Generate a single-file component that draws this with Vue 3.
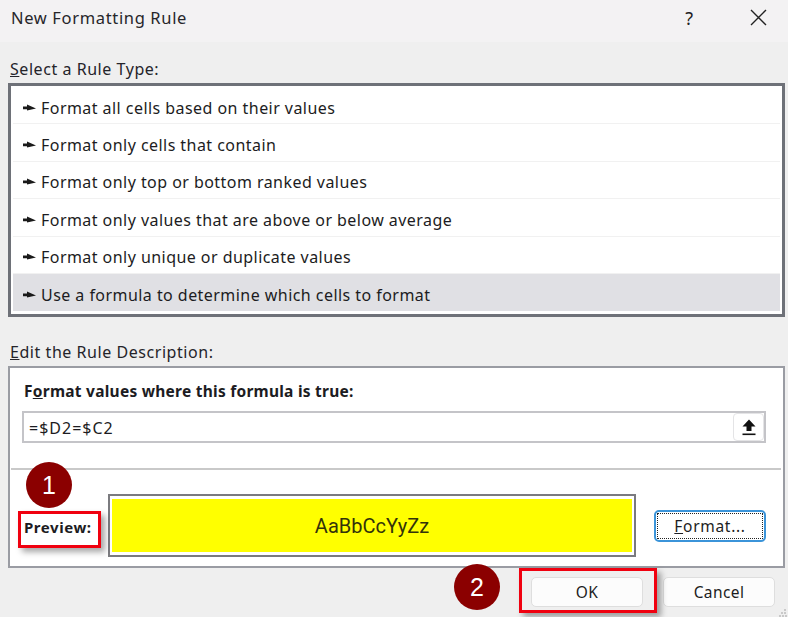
<script setup>
const rules = [
  'Format all cells based on their values',
  'Format only cells that contain',
  'Format only top or bottom ranked values',
  'Format only values that are above or below average',
  'Format only unique or duplicate values',
  'Use a formula to determine which cells to format',
]
</script>

<template>
  <div class="dialog">
    <header class="titlebar">
      <span class="title">New Formatting Rule</span>
      <span class="help">?</span>
      <svg class="close" width="17" height="17" viewBox="0 0 17 17">
        <path d="M1 1L16 16M16 1L1 16" stroke="#222" stroke-width="1.4" fill="none" />
      </svg>
    </header>

    <div class="section-label label-top"><u>S</u>elect a Rule Type:</div>
    <ul class="rule-list">
      <li v-for="(r, i) in rules" :key="r" class="rule" :class="{ selected: i === 5 }">
        <svg class="arrow" width="13" height="8" viewBox="0 0 13 8">
          <path d="M0 2.6H4V0.6L13 4.4L4 6.6V5.2H0Z" fill="#1a1a1a" />
        </svg>
        <span>{{ r }}</span>
      </li>
    </ul>

    <div class="section-label label-edit"><u>E</u>dit the Rule Description:</div>
    <section class="desc">
      <div class="desc-head">F<u>o</u>rmat values where this formula is true:</div>
      <div class="formula">
        <span class="formula-text">=$D2=$C2</span>
        <button class="collapse" type="button" aria-label="Collapse">
          <svg width="14" height="17" viewBox="0 0 14 17">
            <path d="M7 0.5L13.5 7.5H9.5V12H4.5V7.5H0.5Z" fill="#111" />
            <rect x="0.5" y="14.5" width="13" height="1.6" fill="#111" />
          </svg>
        </button>
      </div>
      <hr class="rule-sep" />
      <div class="preview-row">
        <span class="preview-label">Preview:</span>
        <div class="preview-frame"><div class="preview-fill">AaBbCcYyZz</div></div>
        <button class="btn format" type="button"><span class="dots"><u>F</u>ormat...</span></button>
      </div>
    </section>

    <footer class="actions">
      <button class="btn" type="button">OK</button>
      <button class="btn" type="button">Cancel</button>
    </footer>

    <div class="callout-box box-preview"></div>
    <div class="callout-box box-ok"></div>
    <div class="badge badge-1">1</div>
    <div class="badge badge-2">2</div>
    <svg class="grip" width="8" height="8" viewBox="0 0 8 8">
      <path d="M5 0h2v2H5zM2 3h2v2H2zM5 3h2v2H5zM0 6h2v2H0zM3 6h2v2H3zM6 6h2v2H6z" fill="#c9c9c9" />
    </svg>
  </div>
</template>

<style scoped>
.dialog {
  position: relative;
  width: 788px;
  height: 617px;
  overflow: hidden;
  background: #efefef;
  color: #1c1c22;
  font-family: "Noto Sans", "Open Sans", sans-serif;
  font-size: 16px;
  box-sizing: border-box;
}
.titlebar {
  height: 42px;
  background: #f3f2f3;
  display: flex;
  align-items: center;
  padding: 0 21px 7px 11px;
  box-sizing: border-box;
}
.title { flex: 1; font-size: 16.5px; letter-spacing: 0.65px; color: #26262a; }
.help { font-size: 18px; margin-right: 57px; color: #222; }
.section-label { line-height: 22px; padding-left: 10px; color: #24242a; letter-spacing: 0.55px; }
.label-top { margin-top: 16px; }
.rule-list {
  list-style: none;
  margin: 3px 3px 0 8px;
  padding: 1px 2px;
  height: 234px;
  box-sizing: border-box;
  border: 3px solid #6e7178;
  background: #fff;
}
.rule {
  height: 37.4px;
  box-sizing: border-box;
  display: flex;
  align-items: center;
  padding: 5px 0 0 10px;
  gap: 5px;
  letter-spacing: 0.45px;
  border-bottom: 1px solid #f1f1f1;
}
.rule.selected { background: #e0e0e4; border-bottom: 0; }
.label-edit { margin-top: 24px; }
.desc {
  margin: 3px 3px 0 8px;
  height: 202px;
  box-sizing: border-box;
  border: 2px solid #9a9ca3;
  background: #fff;
  padding: 0 1px;
}
.desc-head { font-weight: 700; font-size: 15.5px; letter-spacing: 0.25px; padding: 12px 0 0 13px; line-height: 22px; }
.formula {
  margin: 9px 16px 0 11px;
  height: 32px;
  box-sizing: border-box;
  border: 2px solid #c4c4c8;
  display: flex;
  align-items: center;
  justify-content: space-between;
  padding-left: 5px;
}
.formula-text { letter-spacing: 1px; position: relative; top: 1px; }
.collapse {
  width: 31px;
  height: 28px;
  box-sizing: border-box;
  border: 1px solid #e4e4e6;
  border-radius: 4px;
  background: #fff;
  padding: 0;
  display: flex;
  align-items: center;
  justify-content: center;
}
.rule-sep { border: 0; border-top: 2px solid #c9c9c9; margin: 25px 1px 0 0; }
.preview-row { display: flex; align-items: center; margin-top: 24px; }
.preview-label { font-weight: 700; font-size: 15px; letter-spacing: 0.55px; width: 97px; padding-left: 13px; box-sizing: border-box; position: relative; top: 1px; }
.preview-frame {
  width: 528px;
  height: 63px;
  box-sizing: border-box;
  border: 2px solid #7b7b7f;
  padding: 3px 2px;
}
.preview-fill {
  height: 100%;
  background: #ffff00;
  display: flex;
  align-items: center;
  justify-content: center;
  font-family: "Roboto", "Noto Sans", sans-serif;
  font-size: 20px;
  color: #33330a;
}
.btn {
  width: 112px;
  height: 30px;
  box-sizing: border-box;
  border: 1px solid #dedede;
  border-radius: 5px;
  background: #fcfcfc;
  color: #1c1c22;
  font-family: inherit;
  font-size: 15.5px;
  letter-spacing: 0.4px;
  padding: 0;
}
.format {
  margin-left: 18px;
  height: 32px;
  border: 2px solid #3b94d9;
  background: #fff;
  padding: 1px;
  letter-spacing: 0.7px;
}
.dots {
  display: flex;
  height: 100%;
  box-sizing: border-box;
  border: 1.5px dotted #222;
  align-items: center;
  justify-content: center;
  white-space: pre;
}
.actions { display: flex; justify-content: flex-end; gap: 20px; padding: 9px 13px 0 0; }
.callout-box {
  position: absolute;
  border: 3px solid #f0000f;
  box-sizing: border-box;
  box-shadow: 4px 4px 6px rgba(0, 0, 0, 0.35);
}
.box-preview { left: 18px; top: 511px; width: 83px; height: 37px; }
.box-ok { left: 519px; top: 568px; width: 138px; height: 45px; }
.badge {
  position: absolute;
  width: 46px;
  height: 46px;
  border-radius: 50%;
  background: #8b0000;
  color: #fff;
  font-size: 25px;
  font-family: "Liberation Sans", sans-serif;
  display: flex;
  align-items: center;
  justify-content: center;
}
.badge-1 { left: 26px; top: 462px; }
.badge-2 { left: 454px; top: 564px; }
.grip { position: absolute; right: 1px; bottom: 0; }
</style>
